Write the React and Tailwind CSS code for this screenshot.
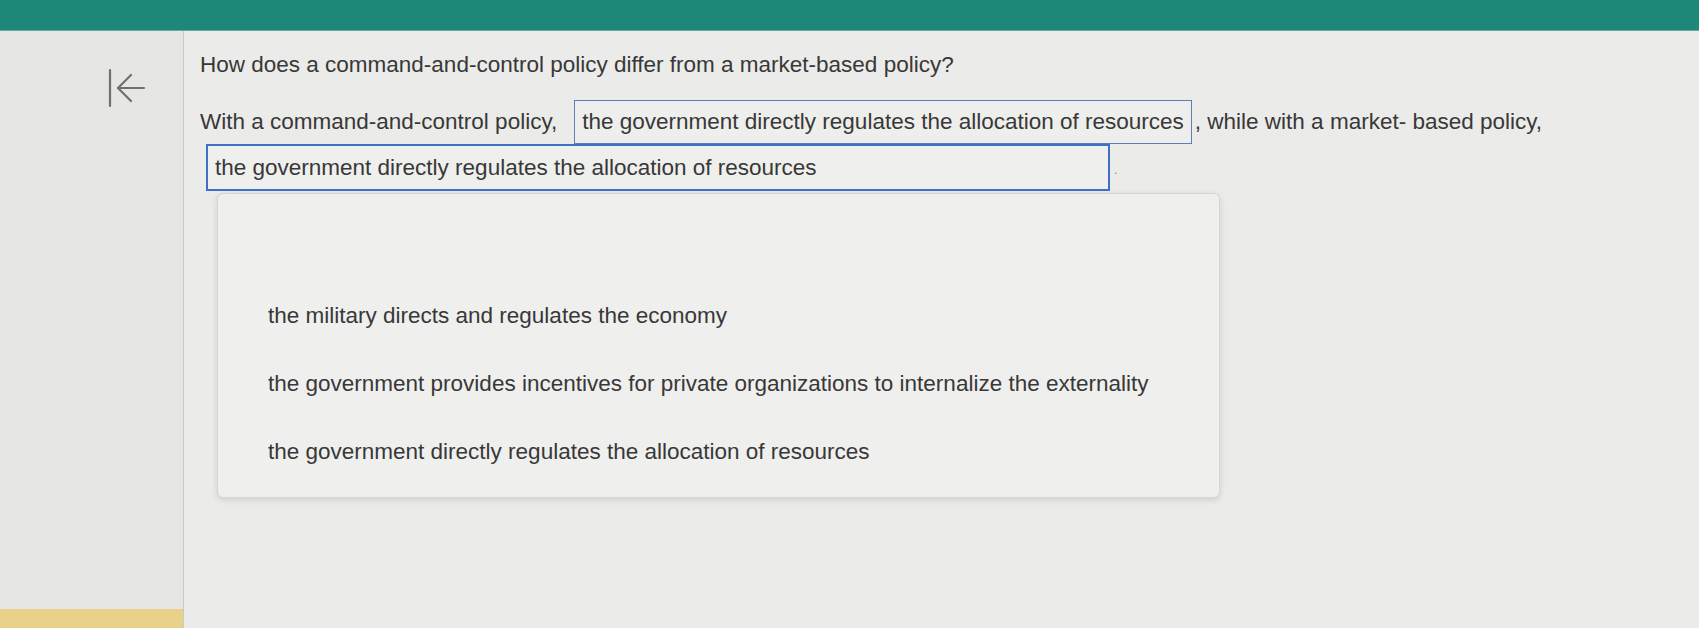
import React from 'react';

const options = [
  '',
  'the military directs and regulates the economy',
  'the government provides incentives for private organizations to internalize the externality',
  'the government directly regulates the allocation of resources',
];

const CollapseIcon = () => (
  <svg width="40" height="42" viewBox="0 0 40 42" fill="none" stroke="#707070" strokeWidth="2.2" strokeLinecap="round" strokeLinejoin="round">
    <line x1="4" y1="3" x2="4" y2="39" />
    <line x1="12" y1="21" x2="38" y2="21" />
    <polyline points="25,8 12,21 25,34" />
  </svg>
);

const App = () => {
  return (
    <div className="w-[1699px] h-[628px] overflow-hidden bg-[#e9e9e7] text-[#383838] font-['Liberation_Sans',Arial,sans-serif] flex flex-col">
      <div className="h-[31px] shrink-0 bg-[#1e8878] border-b border-[#6aa89e]" />
      <div className="flex flex-1">
        <div className="w-[184px] shrink-0 bg-[#e6e6e3] border-r border-[#c9c9c6] flex flex-col justify-between">
          <div className="pt-[36px] pl-[106px]">
            <CollapseIcon />
          </div>
          <div className="h-[19px] bg-[#e9d189]" />
        </div>
        <div className="flex-1 pl-[16px] pt-[19px] bg-[#ebebe9] text-[22.5px]">
          <p className="leading-[30px]">How does a command-and-control policy differ from a market-based policy?</p>
          <div className="mt-[20px] flex items-center">
            <span>With a command-and-control policy,</span>
            <div className="ml-[17px] h-[44px] pl-[7px] pr-[7px] flex items-center border border-[#5d7fb5] bg-[#eeeeec]">
              the government directly regulates the allocation of resources
            </div>
            <span className="ml-[3px]">, while with a market- based policy,</span>
          </div>
          <div className="flex items-end">
            <div className="ml-[6px] w-[904px] h-[47px] pl-[7px] flex items-center border-2 border-[#3f6fc8] bg-[#efefed]">
              the government directly regulates the allocation of resources
            </div>
            <span className="ml-[4px] mb-[12px] text-[12px] text-[#888]">.</span>
          </div>
          <div className="ml-[17px] mt-[2px] w-[1003px] h-[305px] rounded-[6px] bg-[#efefed] border border-[#d6d6d3] shadow-[0_2px_6px_rgba(0,0,0,0.12)] pl-[50px] pt-[4px] flex flex-col">
            {options.map((opt, i) => (
              <div key={i} className={`flex items-center ${i === 0 ? 'h-[84px]' : 'h-[68px]'}`}>
                {opt}
              </div>
            ))}
          </div>
        </div>
      </div>
    </div>
  );
};

export default App;
